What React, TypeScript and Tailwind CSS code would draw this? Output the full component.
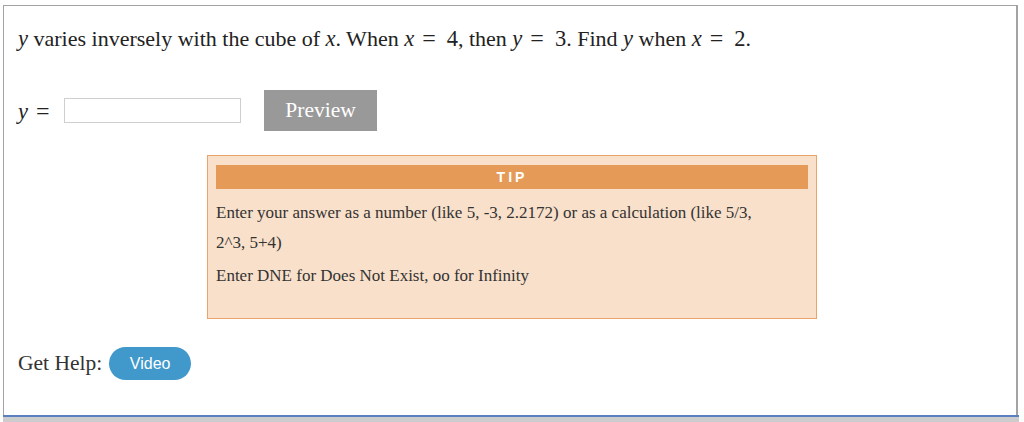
import React from "react";

const serif = "font-['Liberation_Serif','Times_New_Roman',serif]";

const V = ({ children }: { children: React.ReactNode }) => (
    <span className="italic text-[22.5px]">{children}</span>
);

// "var = n" rendered a bit like MathJax: larger glyphs and thick spaces around =
const Eq = ({ v, n }: { v: string; n: string }) => (
    <span className="text-[22.5px]">
        <span className="italic">{v}</span>
        <span className="ml-[8px] mr-[11px] text-[24px]">=</span>
        {n}
    </span>
);

export default function App() {
    return (
        <div className={`w-[1024px] h-[422px] bg-white overflow-hidden pt-[5px] pl-[3px] ${serif}`}>
            <div className="w-[1015px] h-[410px] border-l border-t border-r-2 border-[#a3a3a3] flex flex-col">
                <div className="flex-1 pl-[14px] pt-[19px] text-[21.5px] text-[#222]">
                    <p className="leading-[26px] h-[26px] text-[22px]">
                        <V>y</V> varies inversely with the cube of <V>x</V>. When <Eq v="x" n="4" />, then{" "}
                        <Eq v="y" n="3" />. Find <V>y</V> when <Eq v="x" n="2" />.
                    </p>

                    <div className="flex items-center mt-[39px] h-[41px]">
                        <span className="w-[46px] text-[22.5px]">
                            <span className="italic">y</span>
                            <span className="ml-[8px] text-[24px]">=</span>
                        </span>
                        <input
                            className="w-[177px] h-[25px] border border-[#cfcfcf] bg-white outline-none"
                            aria-label="answer"
                        />
                        <button className="ml-[23px] w-[113px] h-[41px] bg-[#999999] text-white text-[21.5px]">
                            Preview
                        </button>
                    </div>

                    <div className="ml-[189px] mt-[24px] w-[610px] h-[164px] border border-[#e9a46a] bg-[#f9e0ca] px-[8px] pt-[9px]">
                        <div className="h-[24px] bg-[#e59b57] text-white text-[14px] font-bold tracking-[3px] flex items-center justify-center font-['Liberation_Sans',Arial,sans-serif]">
                            TIP
                        </div>
                        <div className="text-[17px] text-[#333] mt-[9px]">
                            <p className="leading-[30px] w-[565px]">
                                Enter your answer as a number (like 5, -3, 2.2172) or as a calculation (like 5/3, 2^3, 5+4)
                            </p>
                            <p className="leading-[30px] mt-[3px]">Enter DNE for Does Not Exist, oo for Infinity</p>
                        </div>
                    </div>

                    <div className="flex items-center mt-[28px]">
                        <span className="text-[21.5px] text-[#333]">Get Help:</span>
                        <button className="ml-[7px] w-[82px] h-[33px] rounded-full bg-[#4098cb] text-white text-[16px] font-['Liberation_Sans',Arial,sans-serif]">
                            Video
                        </button>
                    </div>
                </div>
            </div>
            <div className="w-[1016px] h-[10px] border-t-2 border-[#5b80c2] bg-[#cccccc]" />
        </div>
    );
}
